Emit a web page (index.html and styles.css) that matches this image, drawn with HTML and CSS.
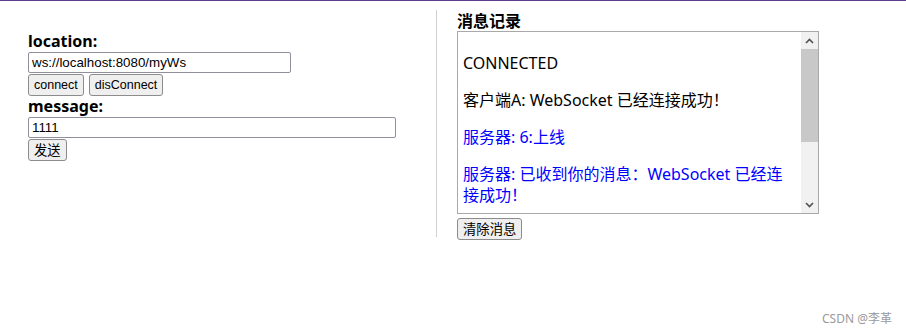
FILE: index.html
```html
<!DOCTYPE html>
<html lang="zh">
<head>
<meta charset="utf-8">
<title>WebSocket</title>
<link rel="stylesheet" href="styles.css">
</head>
<body>
<div class="page">
  <div class="left">
    <div class="label">location:</div>
    <input class="field field-url" type="text" value="ws://localhost:8080/myWs">
    <div class="btn-row">
      <button class="btn">connect</button>
      <button class="btn">disConnect</button>
    </div>
    <div class="label">message:</div>
    <input class="field field-msg" type="text" value="1111">
    <div class="btn-row">
      <button class="btn btn-cjk">发送</button>
    </div>
  </div>
  <div class="right">
    <div class="title">消息记录</div>
    <div class="log">
      <div class="log-body">
        <p class="msg">CONNECTED</p>
        <p class="msg">客户端A: WebSocket 已经连接成功！</p>
        <p class="msg msg-server">服务器: 6:上线</p>
        <p class="msg msg-server msg-last">服务器: 已收到你的消息：WebSocket 已经连接成功！</p>
      </div>
      <div class="scrollbar">
        <div class="sb-btn">
          <svg width="9" height="6" viewBox="0 0 9 6"><polyline points="1,5 4.5,1.5 8,5" fill="none" stroke="#505050" stroke-width="1.6"/></svg>
        </div>
        <div class="sb-track"><div class="sb-thumb"></div></div>
        <div class="sb-btn">
          <svg width="9" height="6" viewBox="0 0 9 6"><polyline points="1,1 4.5,4.5 8,1" fill="none" stroke="#505050" stroke-width="1.6"/></svg>
        </div>
      </div>
    </div>
    <div class="btn-row btn-row-clear">
      <button class="btn btn-cjk">清除消息</button>
    </div>
  </div>
</div>
<div class="watermark">CSDN @李革</div>
</body>
</html>
```

FILE: styles.css
```css
html, body {
  margin: 0;
  padding: 0;
  background: #ffffff;
}
body {
  border-top: 1px solid #5c3c8c;
  font-family: "Noto Sans", "Noto Sans CJK SC", sans-serif;
  color: #000;
  height: 333px;
  position: relative;
  overflow: hidden;
}
.page {
  display: flex;
  padding: 9px 0 0 28px;
}
.left {
  width: 409px;
  height: 227px;
  border-right: 1px solid #d0d0d0;
  padding-top: 21px;
  box-sizing: border-box;
}
.label {
  font-weight: bold;
  font-size: 16px;
  line-height: 21px;
}
.field {
  display: block;
  box-sizing: border-box;
  height: 21px;
  margin: 0;
  padding: 0 3px;
  border: 1px solid #8f8f9d;
  border-radius: 2px;
  font-family: "Liberation Sans", "Noto Sans CJK SC", sans-serif;
  font-size: 13.33px;
  color: #000;
  background: #fff;
}
.field-url { width: 263px; }
.field-msg { width: 368px; }
.btn-row {
  display: flex;
  gap: 5px;
  margin-top: 1px;
}
.btn {
  box-sizing: border-box;
  height: 22px;
  margin: 0;
  padding: 0 5px;
  border: 1px solid #8c8c8c;
  border-radius: 3px;
  background: #efefef;
  font-family: "Liberation Sans", "Noto Sans CJK SC", sans-serif;
  font-size: 12.5px;
  line-height: 18px;
  color: #000;
  white-space: nowrap;
}
.btn-cjk {
  font-family: "Noto Sans CJK SC", sans-serif;
  font-size: 13.33px;
  line-height: 18px;
  padding: 0 5px;
}
.right {
  padding-left: 20px;
}
.title {
  font-weight: bold;
  font-size: 16px;
  line-height: 21px;
  font-family: "Noto Sans CJK SC", sans-serif;
}
.log {
  display: flex;
  width: 362px;
  height: 183px;
  box-sizing: border-box;
  border: 1px solid #a9a9a9;
  background: #fff;
}
.log-body {
  flex: 1;
  overflow: hidden;
  padding: 0 5px;
  font-size: 16px;
  line-height: 21px;
}
.msg {
  margin: 21px 0 16px;
}
.msg + .msg {
  margin-top: 0;
}
.msg-last {
  margin-bottom: 0;
}
.msg-server {
  color: #0000ff;
}
.scrollbar {
  width: 17px;
  display: flex;
  flex-direction: column;
  background: #f1f1f1;
}
.sb-btn {
  height: 17px;
  display: flex;
  align-items: center;
  justify-content: center;
}
.sb-track {
  flex: 1;
}
.sb-thumb {
  height: 93px;
  background: #c8c8c8;
}
.btn-row-clear {
  margin-top: 4px;
}
.watermark {
  position: absolute;
  right: 14px;
  bottom: 7px;
  font-size: 12px;
  color: #9a9a9a;
  font-family: "Noto Sans", "Noto Sans CJK SC", sans-serif;
}
```
